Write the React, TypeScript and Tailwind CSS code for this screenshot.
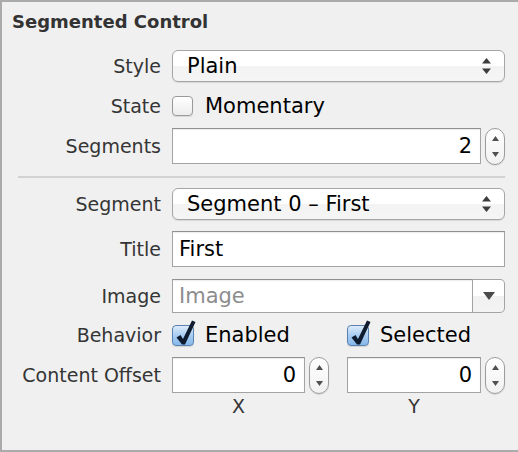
import React from "react";

const font = { fontFamily: '"DejaVu Sans", "Liberation Sans", sans-serif' };

function UpDown() {
  return (
    <svg width="9" height="16" viewBox="0 0 9 16" className="shrink-0">
      <polygon points="4.5,0 9,5.5 0,5.5" fill="#3c3c3c" />
      <polygon points="0,10.5 9,10.5 4.5,16" fill="#3c3c3c" />
    </svg>
  );
}

function Popup({ value }: { value: string }) {
  return (
    <div className="h-[32px] w-[333px] rounded-[6px] border border-[#a6a6a6] bg-[linear-gradient(to_bottom,#ffffff_0%,#ffffff_50%,#f3f3f3_50%,#f5f5f5_100%)] shadow-[0_1px_1px_rgba(0,0,0,0.10)] flex items-center pl-[14px] pr-[13px]">
      <span className="flex-1 text-[21px] leading-none text-black">{value}</span>
      <UpDown />
    </div>
  );
}

function Stepper() {
  return (
    <div className="h-[37px] w-[20px] shrink-0 rounded-[10px] border border-[#9c9c9c] bg-[linear-gradient(to_bottom,#ffffff,#f1f1f1)] shadow-[0_1px_1px_rgba(0,0,0,0.10)] flex flex-col items-center justify-between py-[7px]">
      <svg width="7" height="5" viewBox="0 0 7 5">
        <polygon points="3.5,0 7,5 0,5" fill="#505050" />
      </svg>
      <svg width="7" height="5" viewBox="0 0 7 5">
        <polygon points="0,0 7,0 3.5,5" fill="#505050" />
      </svg>
    </div>
  );
}

function Field({ value, className, align = "left", placeholder }: { value?: string; className: string; align?: "left" | "right"; placeholder?: string }) {
  return (
    <div
      className={
        "border border-[#a3a3a3] border-t-[#909090] bg-white shadow-[inset_0_1px_1px_rgba(0,0,0,0.08)] flex items-center text-[21px] leading-none " +
        (align === "right" ? "justify-end pr-[8px] " : "pl-[6px] ") +
        className
      }
    >
      {value !== undefined ? (
        <span className="text-black">{value}</span>
      ) : (
        <span className="text-[#8d8d8d]">{placeholder}</span>
      )}
    </div>
  );
}

function Checkbox({ checked }: { checked?: boolean }) {
  if (!checked) {
    return (
      <div className="h-[20px] w-[21px] shrink-0 rounded-[4px] border border-[#9a9a9a] bg-[linear-gradient(to_bottom,#ffffff,#ececec)] shadow-[0_1px_1px_rgba(0,0,0,0.10)]" />
    );
  }
  return (
    <div className="relative h-[21px] w-[22px] shrink-0 rounded-[4px] border border-[#5a82b0] bg-[linear-gradient(to_bottom,#dcebfa,#a9cdf2_50%,#86b8ea)] shadow-[0_1px_1px_rgba(0,0,0,0.12)]">
      <svg className="absolute left-0 top-0 overflow-visible" width="22" height="21" viewBox="0 0 22 21">
        <path d="M3.5 11.5 L7.5 9 L10 13 L19 -5.5 L22.5 -4 L12 18.5 L9 18.5 Z" fill="#0f1c30" />
      </svg>
    </div>
  );
}

function Row({ label, children, className }: { label: string; children: React.ReactNode; className: string }) {
  return (
    <div className={"flex items-center " + className}>
      <div className="w-[159px] shrink-0 text-right text-[19px] leading-none text-[#353535]">{label}</div>
      <div className="ml-[11px] flex items-center">{children}</div>
    </div>
  );
}

export default function App() {
  return (
    <div style={font} className="w-[518px] h-[452px] bg-[#f0f0f0] border-t-2 border-l-2 border-b-2 border-[#aaaaaa] overflow-hidden">
      <div className="mt-[7px] ml-[10px] h-[24px] flex items-center text-[18px] font-bold text-[#333333]">
        Segmented Control
      </div>

      <Row label="Style" className="mt-[17px] h-[32px]">
        <Popup value="Plain" />
      </Row>

      <Row label="State" className="mt-[14px] h-[20px]">
        <Checkbox />
        <span className="ml-[12px] text-[21px] leading-none text-black">Momentary</span>
      </Row>

      <Row label="Segments" className="mt-[12px] h-[36px]">
        <Field value="2" align="right" className="h-[36px] w-[309px]" />
        <div className="ml-[4px]">
          <Stepper />
        </div>
      </Row>

      <div className="mt-[12px] ml-[16px] mr-[13px] h-[2px] bg-[#d2d2d2]" />

      <Row label="Segment" className="mt-[10px] h-[32px]">
        <Popup value="Segment 0 – First" />
      </Row>

      <Row label="Title" className="mt-[11px] h-[36px]">
        <Field value="First" className="h-[36px] w-[333px]" />
      </Row>

      <Row label="Image" className="mt-[12px] h-[34px]">
        <div className="flex h-[34px] w-[333px]">
          <Field placeholder="Image" className="h-[34px] flex-1" />
          <div className="h-[34px] w-[32px] rounded-r-[5px] border border-l-0 border-[#a3a3a3] bg-[linear-gradient(to_bottom,#ffffff_0%,#ffffff_50%,#f1f1f1_50%,#f3f3f3_100%)] flex items-center justify-center">
            <svg width="12" height="8" viewBox="0 0 12 8">
              <polygon points="0,0 12,0 6,8" fill="#4a4a4a" />
            </svg>
          </div>
        </div>
      </Row>

      <Row label="Behavior" className="mt-[12px] h-[21px]">
        <Checkbox checked />
        <span className="ml-[11px] w-[142px] text-[21px] leading-none text-black">Enabled</span>
        <Checkbox checked />
        <span className="ml-[11px] text-[21px] leading-none text-black">Selected</span>
      </Row>

      <Row label="Content Offset" className="mt-[11px] h-[36px]">
        <Field value="0" align="right" className="h-[36px] w-[133px]" />
        <div className="ml-[4px]">
          <Stepper />
        </div>
        <div className="ml-[18px]">
          <Field value="0" align="right" className="h-[36px] w-[134px]" />
        </div>
        <div className="ml-[4px]">
          <Stepper />
        </div>
      </Row>

      <div className="mt-[2px] flex h-[22px] items-center text-[19px] leading-none text-[#353535]">
        <div className="ml-[170px] w-[133px] text-center">X</div>
        <div className="ml-[42px] w-[134px] text-center">Y</div>
      </div>
    </div>
  );
}
